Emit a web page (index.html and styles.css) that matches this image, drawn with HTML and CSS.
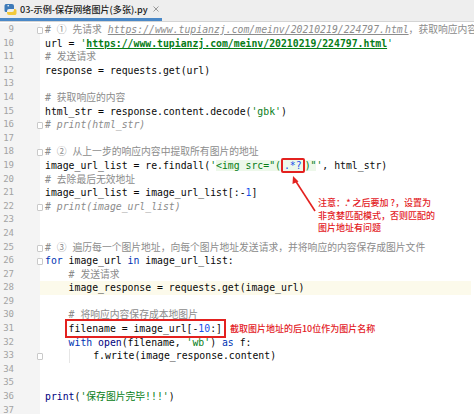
FILE: index.html
```html
<!DOCTYPE html>
<html lang="zh-CN">
<head>
  <meta charset="UTF-8" />
  <meta name="viewport" content="width=device-width, initial-scale=1.0" />
  <title>03-示例-保存网络图片(多张).py</title>
  <link rel="stylesheet" href="styles.css">
</head>
<body>
  <div class="tabbar">
    <div class="tab">
      <svg class="pyicon" width="13" height="13" viewBox="0 0 13 13">
        <path d="M3 1h5a2 2 0 0 1 2 2v3H5a2 2 0 0 0-2 2v1H2a1.5 1.5 0 0 1-1.5-1.5V3A2 2 0 0 1 3 1z" fill="#3d7ab8"/>
        <path d="M10 12H5a2 2 0 0 1-2-2V9h5a2 2 0 0 0 2-2V6h1a1.5 1.5 0 0 1 1.5 1.5V10A2 2 0 0 1 10 12z" fill="#f2c93b"/>
        <circle cx="4.2" cy="2.8" r="0.8" fill="#fff"/>
      </svg>
      <span class="tab-name">03-示例-保存网络图片(多张).py</span>
      <svg class="tab-close" width="6" height="6" viewBox="0 0 6 6">
        <path d="M0.5 0.5L5.5 5.5M5.5 0.5L0.5 5.5" stroke="#9a9a9a" stroke-width="1"/>
      </svg>
    </div>
  </div>

  <div class="editor">
    <div class="ln"><span class="gut"><span class="num">9</span><span class="fold"></span></span><span class="code"><span class="c"># ① 先请求 <span class="u">https://www.tupianzj.com/meinv/20210219/224797.html</span>，获取响应内容</span></span></div>
    <div class="ln"><span class="gut"><span class="num">10</span></span><span class="code">url = <span class="s">'<span class="link">https://www.tupianzj.com/meinv/20210219/224797.html</span>'</span></span></div>
    <div class="ln"><span class="gut"><span class="num">11</span></span><span class="code"><span class="c"># 发送请求</span></span></div>
    <div class="ln"><span class="gut"><span class="num">12</span></span><span class="code">response = requests.get(url)</span></div>
    <div class="ln"><span class="gut"><span class="num">13</span></span><span class="code"></span></div>
    <div class="ln"><span class="gut"><span class="num">14</span></span><span class="code"><span class="c"># 获取响应的内容</span></span></div>
    <div class="ln"><span class="gut"><span class="num">15</span></span><span class="code">html_str = response.content.decode(<span class="s">'gbk'</span>)</span></div>
    <div class="ln"><span class="gut"><span class="num">16</span><span class="fold"></span></span><span class="code"><span class="c ci"># print(html_str)</span></span></div>
    <div class="ln"><span class="gut"><span class="num">17</span></span><span class="code"></span></div>
    <div class="ln"><span class="gut"><span class="num">18</span><span class="fold"></span></span><span class="code"><span class="c"># ② 从上一步的响应内容中提取所有图片的地址</span></span></div>
    <div class="ln"><span class="gut"><span class="num">19</span></span><span class="code">image_url_list = re.findall(<span class="s">'<span class="rx">&lt;img src="(<span class="hit">.*?</span>)"</span>'</span>, html_str)</span></div>
    <div class="ln"><span class="gut"><span class="num">20</span></span><span class="code"><span class="c"># 去除最后无效地址</span></span></div>
    <div class="ln"><span class="gut"><span class="num">21</span></span><span class="code">image_url_list = image_url_list[:-<span class="n">1</span>]</span></div>
    <div class="ln"><span class="gut"><span class="num">22</span><span class="fold"></span></span><span class="code"><span class="c ci"># print(image_url_list)</span></span></div>
    <div class="ln"><span class="gut"><span class="num">23</span></span><span class="code"></span></div>
    <div class="ln"><span class="gut"><span class="num">24</span></span><span class="code"></span></div>
    <div class="ln"><span class="gut"><span class="num">25</span><span class="fold"></span></span><span class="code"><span class="c"># ③ 遍历每一个图片地址，向每个图片地址发送请求，并将响应的内容保存成图片文件</span></span></div>
    <div class="ln"><span class="gut"><span class="num">26</span><span class="fold"></span></span><span class="code"><span class="k">for</span> image_url <span class="k">in</span> image_url_list:</span></div>
    <div class="ln"><span class="gut"><span class="num">27</span></span><span class="code">    <span class="c"># 发送请求</span></span></div>
    <div class="ln current"><span class="gut"><span class="num">28</span></span><span class="code">    image_response = requests.get(image_url)</span></div>
    <div class="ln"><span class="gut"><span class="num">29</span></span><span class="code"></span></div>
    <div class="ln"><span class="gut"><span class="num">30</span></span><span class="code">    <span class="c"># 将响应内容保存成本地图片</span></span></div>
    <div class="ln"><span class="gut"><span class="num">31</span></span><span class="code">    <span class="box">filename = image_url[-<span class="n">10</span>:]</span><span class="note">截取图片地址的后10位作为图片名称</span></span></div>
    <div class="ln"><span class="gut"><span class="num">32</span></span><span class="code">    <span class="k">with</span> <span class="b">open</span>(filename, <span class="s">'wb'</span>) <span class="k">as</span> f:</span></div>
    <div class="ln"><span class="gut"><span class="num">33</span><span class="fold"></span></span><span class="code">    <span class="guide"></span>    f.write(image_response.content)</span></div>
    <div class="ln"><span class="gut"><span class="num">34</span></span><span class="code"></span></div>
    <div class="ln"><span class="gut"><span class="num">35</span></span><span class="code"></span></div>
    <div class="ln"><span class="gut"><span class="num">36</span></span><span class="code"><span class="b">print</span>(<span class="s">'保存图片完毕!!!'</span>)</span></div>
    <div class="ln"><span class="gut"><span class="num">37</span></span><span class="code"></span></div>
  </div>

  <!-- annotation over the code -->
  <svg class="arrow" width="474" height="414" viewBox="0 0 474 414">
    <line x1="315" y1="211" x2="295" y2="180" stroke="#e3211f" stroke-width="1.6"/>
    <path d="M293 176 L298.5 181.5 L292.5 184 Z" fill="#e3211f"/>
  </svg>
  <div class="callout">
    <div>注意：.* 之后要加 ?，设置为</div>
    <div>非贪婪匹配模式，否则匹配的</div>
    <div>图片地址有问题</div>
  </div>
</body>
</html>
```

FILE: styles.css
```css
body {
  margin: 0;
  width: 474px;
  height: 414px;
  overflow: hidden;
  position: relative;
  background: #fff;
}

.tabbar {
  height: 21px;
  background: #eeeeee;
  border-bottom: 1px solid #d4d4d4;
  display: flex;
}

.tab {
  width: 155px;
  height: 18px;
  border-bottom: 3px solid #4a88c7;
  display: flex;
  align-items: center;
  padding-left: 4px;
  padding-right: 3px;
}

.pyicon {
  flex: none;
  margin-right: 3px;
}

.tab-name {
  font-family: "Noto Sans CJK SC", "Noto Sans", sans-serif;
  font-size: 9.1px;
  font-weight: 500;
  color: #222;
  white-space: nowrap;
}

.tab-close {
  flex: none;
  margin-left: auto;
}

.editor {
  padding-top: 1px;
  font-family: "DejaVu Sans Mono", "Noto Sans CJK SC", monospace;
  font-size: 9.8px;
  line-height: 13.6px;
  color: #080808;
}

.ln {
  display: grid;
  grid-template-columns: 40px minmax(0, 1fr);
  height: 13.6px;
}

.gut {
  background: #f4f4f4;
  display: flex;
  align-items: center;
  position: relative;
}

.num {
  width: 14px;
  text-align: right;
  font-size: 9px;
  color: #a3a3a3;
}

.fold {
  position: absolute;
  left: 37px;
  top: 4px;
  width: 4px;
  height: 5px;
  border: 1px solid #c9c9c9;
  border-radius: 1px;
  background: #fff;
}

.code {
  padding-left: 5px;
  white-space: pre;
}

.current .code {
  background: #fcfaeb;
  margin-right: 3px;
}

.c { color: #8c8c8c; }
.ci { font-style: italic; }
.s { color: #067d17; }
.k { color: #0033b3; }
.n { color: #1750eb; }
.b { color: #000080; }
.u { text-decoration: underline; font-style: italic; }
.link { text-decoration: underline; font-weight: bold; }

.rx {
  background: #edf8ea;
}

.hit {
  color: #1750eb;
  border: 2px solid #e3211f;
  border-radius: 2px;
  padding: 0 1px;
}

.box {
  outline: 2px solid #e3211f;
  outline-offset: 2px;
}

.note {
  margin-left: 8px;
  font-family: "Noto Sans CJK SC", sans-serif;
  font-size: 9px;
  font-weight: 500;
  color: #e3211f;
}

.guide {
  display: inline-block;
  width: 0;
  height: 13.6px;
  vertical-align: top;
  border-left: 1px solid #e6e6e6;
}

.arrow {
  position: absolute;
  left: 0;
  top: 0;
  pointer-events: none;
}

.callout {
  position: absolute;
  left: 318px;
  top: 197px;
  font-family: "Noto Sans CJK SC", sans-serif;
  font-size: 9px;
  font-weight: 500;
  line-height: 12.5px;
  color: #e3211f;
}
```
